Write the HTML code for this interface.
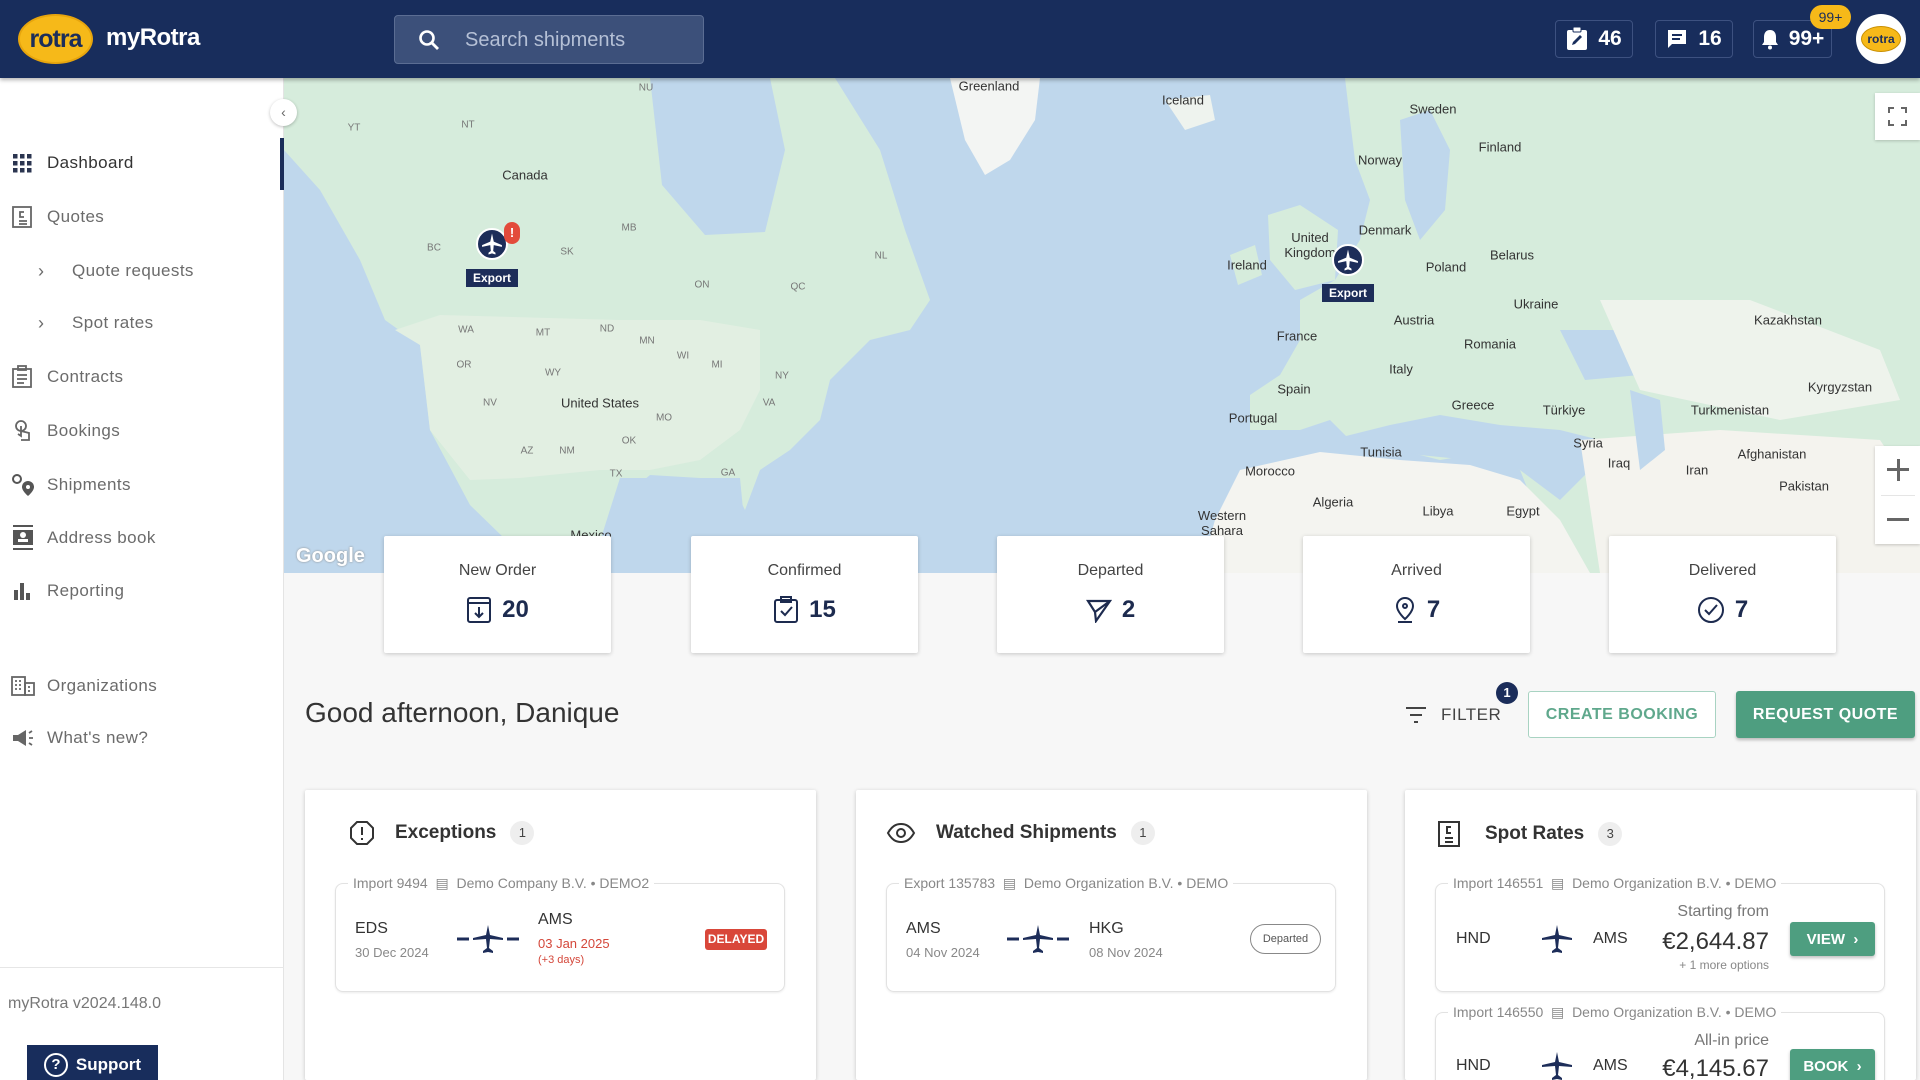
<!DOCTYPE html>
<html><head><meta charset="utf-8">
<style>
*{box-sizing:border-box;margin:0;padding:0}
html{overflow:hidden;width:1920px;height:1080px}
body{width:1920px;height:1080px;overflow:hidden;background:#f7f7f7;font-family:"Liberation Sans",sans-serif;position:relative;color:#333}
.abs{position:absolute}
.hdr{left:0;top:0;width:1920px;height:78px;background:#182d5c;box-shadow:0 2px 4px rgba(0,0,0,.3);z-index:5}
.hbtn{top:20px;height:38px;border:1px solid #3d5180;border-radius:4px;color:#fff;font-weight:bold;font-size:21px;display:flex;align-items:center;justify-content:center;gap:10px}
.side{left:0;top:78px;width:284px;height:1002px;background:#fff;border-right:1px solid #e4e4e4}
.nav{left:0;width:284px;height:30px;font-size:17px;color:#6b6b6b;letter-spacing:.4px;display:flex;align-items:center}
.nav svg{position:absolute;left:11px}
.nav span{position:absolute;left:47px}
.map{left:284px;top:78px;width:1636px;height:495px;background:#b9d4ea;overflow:hidden}
.ml{position:absolute;font-size:13px;color:#333;transform:translate(-50%,-50%);white-space:nowrap}
.ms{position:absolute;font-size:10px;color:#777;transform:translate(-50%,-50%)}
.card{background:#fff;box-shadow:0 1px 4px rgba(0,0,0,.2);border-radius:2px}
.stat{top:536px;width:227px;height:117px}
.stat .l{position:absolute;top:26px;width:100%;text-align:center;font-size:16px;color:#444}
.stat .v{position:absolute;top:60px;width:100%;display:flex;justify-content:center;align-items:center;gap:10px;font-size:24px;color:#1d2b4f;font-weight:bold}
.panel{top:790px;width:511px;height:290px;overflow:hidden}
.ptitle{position:absolute;top:30px;left:44px;display:flex;align-items:center;font-size:19px;font-weight:bold;color:#333}
.cnt{display:inline-block;width:24px;height:24px;border-radius:50%;background:#eee;font-size:13px;font-weight:normal;text-align:center;line-height:24px;margin-left:14px;color:#444}
fieldset{position:absolute;border:1px solid #e2e2e2;border-radius:8px;box-shadow:0 1px 2px rgba(0,0,0,.08)}
legend{font-size:14px;color:#888;padding:0 5px;margin-left:12px;white-space:nowrap}
.code{position:absolute;font-size:16px;color:#333}
.dt{position:absolute;font-size:13px;color:#888}
.gbtn{background:#4e9e80;color:#fff;font-weight:bold;border-radius:3px;box-shadow:0 2px 3px rgba(0,0,0,.25);display:flex;align-items:center;justify-content:center}
</style></head><body>

<div class="abs hdr">
  <div class="abs" style="left:18px;top:14px;width:75px;height:50px;border-radius:50%;background:#f6b919;border:2px solid #e7a50d;font-weight:bold;color:#1b2d5a;font-size:25px;text-align:center;line-height:46px;letter-spacing:-1px">rotra</div>
  <div class="abs" style="left:106px;top:24px;color:#fff;font-size:24px;font-weight:bold;letter-spacing:-.5px">myRotra</div>
  <div class="abs" style="left:394px;top:15px;width:310px;height:49px;background:#3c507a;border:1px solid #5b6d93;border-radius:4px">
    <svg class="abs" style="left:22px;top:12px" width="24" height="24" viewBox="0 0 24 24"><circle cx="10" cy="10" r="6.5" fill="none" stroke="#fff" stroke-width="2.6"/><path d="M15 15l6 6" stroke="#fff" stroke-width="2.8"/></svg>
    <div class="abs" style="left:70px;top:13px;color:#b5c0d6;font-size:20px">Search shipments</div>
  </div>
  <div class="abs hbtn" style="left:1555px;width:78px"><svg width="22" height="24" viewBox="0 0 22 24"><rect x="1" y="3" width="20" height="20" rx="2" fill="#fff"/><rect x="7" y="0" width="8" height="5" rx="1" fill="#fff" stroke="#182d5c"/><path d="M6 18l1-3 7-7 2 2-7 7z" fill="#182d5c"/></svg>46</div>
  <div class="abs hbtn" style="left:1655px;width:78px"><svg width="22" height="22" viewBox="0 0 22 22"><path d="M2 2h18v14H6l-4 4z" fill="#fff"/><path d="M6 7h10M6 11h8" stroke="#182d5c" stroke-width="2"/></svg>16</div>
  <div class="abs hbtn" style="left:1753px;width:79px"><svg width="18" height="22" viewBox="0 0 18 22"><path d="M9 2c4 0 6 3 6 7v5l2 3H1l2-3V9c0-4 2-7 6-7z" fill="#fff"/><circle cx="9" cy="19.5" r="2" fill="#fff"/></svg>99+</div>
  <div class="abs" style="left:1810px;top:5px;width:41px;height:24px;border-radius:12px;background:#f6b919;color:#1b2d5a;font-size:14px;text-align:center;line-height:24px">99+</div>
  <div class="abs" style="left:1856px;top:14px;width:50px;height:50px;border-radius:50%;background:#fff">
    <div class="abs" style="left:5px;top:12px;width:40px;height:26px;border-radius:50%;background:#f6b919;border:1px solid #c98f00;font-size:12px;font-weight:bold;color:#1b2d5a;text-align:center;line-height:24px">rotra</div>
  </div>
</div>

<div class="abs side">
  <div class="abs" style="left:270px;top:21px;width:27px;height:27px;border-radius:50%;background:#fff;box-shadow:0 1px 3px rgba(0,0,0,.25);z-index:3;text-align:center;line-height:26px;color:#666;font-size:14px">&#8249;</div>
  <div class="abs" style="left:280px;top:60px;width:4px;height:52px;background:#1b2d5a"></div>
  <div class="abs" style="left:0;top:889px;width:284px;height:1px;background:#e6e6e6"></div>
  <div class="abs" style="left:8px;top:917px;font-size:16px;color:#777">myRotra v2024.148.0</div>
  <div class="abs" style="left:27px;top:967px;width:131px;height:40px;background:#182d5c;color:#fff;font-weight:bold;font-size:17px;display:flex;align-items:center;justify-content:center;gap:8px"><span style="width:24px;height:24px;border:2px solid #fff;border-radius:50%;font-size:15px;text-align:center;line-height:20px">?</span>Support</div>
</div>

<div class="abs nav" style="top:148px;color:#333"><svg width="22" height="22" viewBox="0 0 22 22" fill="#2b3550"><rect x="2" y="2" width="4.5" height="4.5"/><rect x="9" y="2" width="4.5" height="4.5"/><rect x="16" y="2" width="4.5" height="4.5"/><rect x="2" y="9" width="4.5" height="4.5"/><rect x="9" y="9" width="4.5" height="4.5"/><rect x="16" y="9" width="4.5" height="4.5"/><rect x="2" y="16" width="4.5" height="4.5"/><rect x="9" y="16" width="4.5" height="4.5"/><rect x="16" y="16" width="4.5" height="4.5"/></svg><span>Dashboard</span></div>
<div class="abs nav" style="top:202px"><svg width="22" height="24" viewBox="0 0 22 24" fill="none" stroke="#666" stroke-width="1.8"><rect x="2" y="2" width="18" height="20"/><path d="M13 7h-4v5h4M8 16h8M8 19h8"/></svg><span>Quotes</span></div>
<div class="abs nav" style="top:256px"><span style="left:38px;font-size:18px">&#8250;</span><span style="left:72px">Quote requests</span></div>
<div class="abs nav" style="top:308px"><span style="left:38px;font-size:18px">&#8250;</span><span style="left:72px">Spot rates</span></div>
<div class="abs nav" style="top:362px"><svg width="22" height="24" viewBox="0 0 22 24" fill="none" stroke="#666" stroke-width="1.8"><rect x="2" y="4" width="18" height="18"/><rect x="7" y="1" width="8" height="4"/><path d="M6 10h10M6 14h10M6 18h7"/></svg><span>Contracts</span></div>
<div class="abs nav" style="top:416px"><svg width="22" height="24" viewBox="0 0 22 24" fill="none" stroke="#666" stroke-width="1.8"><circle cx="10" cy="7" r="5"/><path d="M10 7v10l-3-2M10 12l8 2v7H10"/></svg><span>Bookings</span></div>
<div class="abs nav" style="top:470px"><svg width="26" height="24" viewBox="0 0 26 24" fill="#555"><circle cx="6" cy="6" r="4" fill="none" stroke="#555" stroke-width="2"/><path d="M17 8a6 6 0 0 1 6 6c0 4-6 9-6 9s-6-5-6-9a6 6 0 0 1 6-6z"/><circle cx="17" cy="14" r="2" fill="#fff"/></svg><span>Shipments</span></div>
<div class="abs nav" style="top:523px"><svg width="24" height="26" viewBox="0 0 24 26" fill="#555"><rect x="2" y="0" width="20" height="2"/><rect x="2" y="5" width="20" height="15"/><rect x="2" y="23" width="20" height="2"/><circle cx="12" cy="10" r="3" fill="#fff"/><rect x="7" y="14" width="10" height="3" fill="#fff"/></svg><span>Address book</span></div>
<div class="abs nav" style="top:576px"><svg width="22" height="22" viewBox="0 0 22 22" fill="#555"><rect x="3" y="10" width="4" height="10"/><rect x="9" y="3" width="4" height="17"/><rect x="15" y="13" width="4" height="7"/></svg><span>Reporting</span></div>
<div class="abs nav" style="top:671px"><svg width="24" height="22" viewBox="0 0 24 22" fill="none" stroke="#666" stroke-width="1.8"><rect x="1" y="2" width="13" height="18"/><rect x="14" y="8" width="9" height="12"/><path d="M4 6h2M8 6h2M4 10h2M8 10h2M4 14h2M8 14h2M17 12h2M17 16h2"/></svg><span>Organizations</span></div>
<div class="abs nav" style="top:723px"><svg width="26" height="22" viewBox="0 0 26 22" fill="#666"><path d="M2 8h5l8-5v16l-8-5H2z"/><path d="M18 6l3-2M18 11h4M18 16l3 2" stroke="#666" stroke-width="1.8"/></svg><span>What's new?</span></div>

<div class="abs map">
<svg class="abs" style="left:0;top:0" width="1636" height="495" viewBox="284 78 1636 495">
  <rect x="284" y="78" width="1636" height="495" fill="#bfd7ec"/>
  <path d="M284 78H835L880 150 905 230 930 300 910 330 870 340 850 360 830 380 820 420 790 450 760 470 745 510 730 480 700 478 650 475 620 500 600 573H284Z" fill="#d6ecdc"/>
  <path d="M650 78H770L785 150 765 232 705 235 662 185Z" fill="#bfd7ec"/>
  <path d="M284 150L320 190 360 260 385 320 420 345 430 430 470 505 540 573H284Z" fill="#bfd7ec"/>
  <path d="M395 330L420 345 430 430 470 480 520 478 600 470 650 470 700 460 740 430 760 390 760 330 700 320 620 320 440 315Z" fill="#e2efe2"/>
  <path d="M620 478L740 478 745 530 700 573H590Z" fill="#bfd7ec"/>
  <path d="M950 78H1040L1035 120 1010 160 985 175 965 140Z" fill="#f3f5f3"/>
  <path d="M1165 100L1210 95 1215 120 1185 130Z" fill="#eef3ee"/>
  <path d="M1345 78H1920V573H1560L1540 520 1520 470 1470 455 1440 460 1400 450 1350 440 1330 420 1300 430 1250 430 1250 395 1280 375 1300 340 1300 300 1335 280 1360 240 1370 200 1355 160 1350 120Z" fill="#d6ecdc"/>
  <path d="M1400 120L1430 110 1450 150 1445 210 1420 240 1405 200Z" fill="#bfd7ec"/>
  <path d="M1268 215L1300 205 1338 230 1335 280 1295 290 1270 260Z" fill="#d6ecdc"/>
  <path d="M1230 255L1255 245 1262 275 1238 285Z" fill="#d6ecdc"/>
  <path d="M1330 440L1420 455 1470 460 1520 470 1560 500 1590 470 1600 440 1560 430 1500 425 1440 415 1390 425Z" fill="#bfd7ec"/>
  <path d="M1560 330L1630 330 1640 375 1585 380Z" fill="#bfd7ec"/>
  <path d="M1240 470L1320 452 1400 460 1470 465 1520 480 1560 520 1590 573H1200L1215 520Z" fill="#f4f4f0"/>
  <path d="M1580 440L1720 430 1880 440 1920 500V573H1600Z" fill="#f4f3ee"/>
  <path d="M1600 300L1750 300 1880 350 1900 400 1780 420 1640 390Z" fill="#eef3ec"/>
  <path d="M1630 390L1660 400 1665 450 1640 470Z" fill="#bfd7ec"/>
</svg>
<div class="ml" style="left:705px;top:8px">Greenland</div>
<div class="ml" style="left:899px;top:22px">Iceland</div>
<div class="ml" style="left:1149px;top:31px">Sweden</div>
<div class="ml" style="left:1216px;top:69px">Finland</div>
<div class="ml" style="left:1096px;top:82px">Norway</div>
<div class="ml" style="left:241px;top:97px">Canada</div>
<div class="ml" style="left:1101px;top:152px">Denmark</div>
<div class="ml" style="left:1026px;top:167px;line-height:15px;text-align:center">United<br>Kingdom</div>
<div class="ml" style="left:963px;top:187px">Ireland</div>
<div class="ml" style="left:1162px;top:189px">Poland</div>
<div class="ml" style="left:1228px;top:177px">Belarus</div>
<div class="ml" style="left:1252px;top:226px">Ukraine</div>
<div class="ml" style="left:1504px;top:242px">Kazakhstan</div>
<div class="ml" style="left:1013px;top:258px">France</div>
<div class="ml" style="left:1130px;top:242px">Austria</div>
<div class="ml" style="left:1206px;top:266px">Romania</div>
<div class="ml" style="left:1010px;top:311px">Spain</div>
<div class="ml" style="left:1117px;top:291px">Italy</div>
<div class="ml" style="left:969px;top:340px">Portugal</div>
<div class="ml" style="left:1189px;top:327px">Greece</div>
<div class="ml" style="left:1280px;top:332px">Türkiye</div>
<div class="ml" style="left:1446px;top:332px">Turkmenistan</div>
<div class="ml" style="left:1556px;top:309px">Kyrgyzstan</div>
<div class="ml" style="left:1304px;top:365px">Syria</div>
<div class="ml" style="left:1335px;top:385px">Iraq</div>
<div class="ml" style="left:1413px;top:392px">Iran</div>
<div class="ml" style="left:1488px;top:376px">Afghanistan</div>
<div class="ml" style="left:1520px;top:408px">Pakistan</div>
<div class="ml" style="left:986px;top:393px">Morocco</div>
<div class="ml" style="left:1097px;top:374px">Tunisia</div>
<div class="ml" style="left:1049px;top:424px">Algeria</div>
<div class="ml" style="left:1154px;top:433px">Libya</div>
<div class="ml" style="left:1239px;top:433px">Egypt</div>
<div class="ml" style="left:938px;top:445px;line-height:15px;text-align:center">Western<br>Sahara</div>
<div class="ml" style="left:316px;top:325px">United States</div>
<div class="ml" style="left:307px;top:457px">Mexico</div>
<div class="ms" style="left:362px;top:10px">NU</div><div class="ms" style="left:184px;top:47px">NT</div><div class="ms" style="left:70px;top:50px">YT</div>
<div class="ms" style="left:345px;top:150px">MB</div><div class="ms" style="left:150px;top:170px">BC</div><div class="ms" style="left:283px;top:174px">SK</div>
<div class="ms" style="left:418px;top:207px">ON</div><div class="ms" style="left:514px;top:209px">QC</div><div class="ms" style="left:597px;top:178px">NL</div>
<div class="ms" style="left:182px;top:252px">WA</div><div class="ms" style="left:259px;top:255px">MT</div><div class="ms" style="left:323px;top:251px">ND</div>
<div class="ms" style="left:363px;top:263px">MN</div><div class="ms" style="left:180px;top:287px">OR</div><div class="ms" style="left:269px;top:295px">WY</div>
<div class="ms" style="left:399px;top:278px">WI</div><div class="ms" style="left:433px;top:287px">MI</div><div class="ms" style="left:498px;top:298px">NY</div>
<div class="ms" style="left:206px;top:325px">NV</div><div class="ms" style="left:380px;top:340px">MO</div><div class="ms" style="left:485px;top:325px">VA</div>
<div class="ms" style="left:243px;top:373px">AZ</div><div class="ms" style="left:283px;top:373px">NM</div><div class="ms" style="left:345px;top:363px">OK</div>
<div class="ms" style="left:332px;top:396px">TX</div><div class="ms" style="left:444px;top:395px">GA</div>
<div class="abs" style="left:192px;top:150px;width:32px;height:32px;border-radius:50%;background:#1d2d59;border:2px solid #fff"><svg width="28" height="28" viewBox="0 0 24 24"><path d="M12 3l1.5 7 7 3v1.5l-7-1.5-.5 5 2 1.5V21l-3-1-3 1v-1.5l2-1.5-.5-5-7 1.5V13l7-3z" fill="#fff"/></svg></div>
<div class="abs" style="left:220px;top:144px;width:16px;height:22px;border-radius:8px;background:#e34b3b;color:#fff;font-size:13px;font-weight:bold;text-align:center;line-height:22px">!</div>
<div class="abs" style="left:182px;top:191px;width:52px;height:18px;background:#1d2d59;color:#fff;font-size:12px;font-weight:bold;text-align:center;line-height:18px">Export</div>
<div class="abs" style="left:1048px;top:166px;width:32px;height:32px;border-radius:50%;background:#1d2d59;border:2px solid #fff"><svg width="28" height="28" viewBox="0 0 24 24"><path d="M12 3l1.5 7 7 3v1.5l-7-1.5-.5 5 2 1.5V21l-3-1-3 1v-1.5l2-1.5-.5-5-7 1.5V13l7-3z" fill="#fff"/></svg></div>
<div class="abs" style="left:1038px;top:206px;width:52px;height:18px;background:#1d2d59;color:#fff;font-size:12px;font-weight:bold;text-align:center;line-height:18px">Export</div>
<div class="abs" style="left:1591px;top:15px;width:45px;height:47px;background:#fff;box-shadow:0 1px 3px rgba(0,0,0,.2)"><svg class="abs" style="left:13px;top:14px" width="19" height="19" viewBox="0 0 19 19" fill="none" stroke="#666" stroke-width="2"><path d="M1 6V1h5M13 1h5v5M18 13v5h-5M6 18H1v-5"/></svg></div>
<div class="abs" style="left:1591px;top:368px;width:45px;height:98px;background:#fff;box-shadow:0 1px 3px rgba(0,0,0,.2)"><div class="abs" style="left:12px;top:22px;width:22px;height:3px;background:#666"></div><div class="abs" style="left:21.5px;top:13px;width:3px;height:22px;background:#666"></div><div class="abs" style="left:6px;top:49px;width:34px;height:1px;background:#e5e5e5"></div><div class="abs" style="left:12px;top:72px;width:22px;height:3px;background:#666"></div></div>
<div class="abs" style="left:12px;top:467px;font-size:20px;font-weight:bold;color:#fff;text-shadow:0 0 2px #888">Google</div>
</div>

<div class="abs card stat" style="left:384px"><div class="l">New Order</div><div class="v"><svg width="26" height="28" viewBox="0 0 26 28" fill="none" stroke="#1d2b4f" stroke-width="2"><rect x="2" y="2" width="22" height="24" rx="2"/><path d="M2 7h22M13 11v10M9 17l4 4 4-4"/></svg>20</div></div>
<div class="abs card stat" style="left:691px"><div class="l">Confirmed</div><div class="v"><svg width="26" height="28" viewBox="0 0 26 28" fill="none" stroke="#1d2b4f" stroke-width="2"><rect x="2" y="4" width="22" height="22" rx="2"/><rect x="8" y="1" width="10" height="5"/><path d="M8 15l4 4 7-8"/></svg>15</div></div>
<div class="abs card stat" style="left:997px"><div class="l">Departed</div><div class="v"><svg width="26" height="26" viewBox="0 0 26 26" fill="none" stroke="#1d2b4f" stroke-width="2.2"><path d="M2 4h22L10 24l-1-9zM9 15l15-11"/></svg>2</div></div>
<div class="abs card stat" style="left:1303px"><div class="l">Arrived</div><div class="v"><svg width="24" height="28" viewBox="0 0 24 28" fill="none" stroke="#1d2b4f" stroke-width="2"><path d="M12 2a8 8 0 0 1 8 8c0 6-8 13-8 13S4 16 4 10a8 8 0 0 1 8-8z"/><circle cx="12" cy="10" r="2"/><path d="M5 26h14"/></svg>7</div></div>
<div class="abs card stat" style="left:1609px"><div class="l">Delivered</div><div class="v"><svg width="28" height="28" viewBox="0 0 28 28" fill="none" stroke="#1d2b4f" stroke-width="2"><circle cx="14" cy="14" r="12"/><path d="M8 14l4 4 8-9"/></svg>7</div></div>

<div class="abs" style="left:305px;top:697px;font-size:28px;color:#333">Good afternoon, Danique</div>
<svg class="abs" style="left:1404px;top:705px" width="24" height="20" viewBox="0 0 24 20" stroke="#444" stroke-width="2"><path d="M2 3h20M6 10h12M10 17h4"/></svg>
<div class="abs" style="left:1441px;top:705px;font-size:17px;color:#444;letter-spacing:.5px">FILTER</div>
<div class="abs" style="left:1496px;top:682px;width:22px;height:22px;border-radius:50%;background:#1b2d5a;color:#fff;font-size:13px;font-weight:bold;text-align:center;line-height:22px">1</div>
<div class="abs" style="left:1528px;top:691px;width:188px;height:47px;border:1px solid #a8d3c2;border-radius:3px;background:#fff;color:#5fa88c;font-weight:bold;font-size:16px;letter-spacing:.5px;text-align:center;line-height:45px">CREATE BOOKING</div>
<div class="abs gbtn" style="left:1736px;top:691px;width:179px;height:47px;font-size:16px;letter-spacing:.5px">REQUEST QUOTE</div>

<div class="abs card panel" style="left:305px">
  <div class="ptitle"><svg width="26" height="26" viewBox="0 0 26 26" fill="none" stroke="#333" stroke-width="2"><path d="M8 2h10l6 6v10l-6 6H8l-6-6V8z"/><path d="M13 7v8M13 18v2"/></svg><span style="margin-left:20px">Exceptions</span><span class="cnt">1</span></div>
  <fieldset style="left:30px;top:85px;width:450px;height:117px"><legend>Import 9494 &nbsp;▤&nbsp; Demo Company B.V. • DEMO2</legend></fieldset>
  <div class="code" style="left:50px;top:130px">EDS</div><div class="dt" style="left:50px;top:155px">30 Dec 2024</div>
  <svg class="abs" style="left:152px;top:134px" width="62" height="30" viewBox="0 0 62 30"><path d="M0 15h12M50 15h12" stroke="#1d2d59" stroke-width="3"/><path d="M31 1l2 10 13 3v2l-13-1-1 9 4 3v2l-5-1-5 1v-2l4-3-1-9-13 1v-2l13-3z" fill="#1d2d59"/></svg>
  <div class="code" style="left:233px;top:121px">AMS</div><div class="dt" style="left:233px;top:146px;color:#d4473a">03 Jan 2025</div><div class="dt" style="left:233px;top:164px;color:#d4473a;font-size:11px">(+3 days)</div>
  <div class="abs" style="left:400px;top:139px;width:62px;height:21px;background:#d9473a;color:#fff;font-size:12px;font-weight:bold;border-radius:3px;text-align:center;line-height:21px">DELAYED</div>
</div>

<div class="abs card panel" style="left:856px">
  <div class="ptitle" style="left:30px"><svg width="30" height="26" viewBox="0 0 30 26" fill="none" stroke="#333" stroke-width="2"><path d="M2 13C6 6 10 4 15 4s9 2 13 9c-4 7-8 9-13 9S6 20 2 13z"/><circle cx="15" cy="13" r="4"/></svg><span style="margin-left:20px">Watched Shipments</span><span class="cnt">1</span></div>
  <fieldset style="left:30px;top:85px;width:450px;height:117px"><legend>Export 135783 &nbsp;▤&nbsp; Demo Organization B.V. • DEMO</legend></fieldset>
  <div class="code" style="left:50px;top:130px">AMS</div><div class="dt" style="left:50px;top:155px">04 Nov 2024</div>
  <svg class="abs" style="left:151px;top:134px" width="62" height="30" viewBox="0 0 62 30"><path d="M0 15h12M50 15h12" stroke="#1d2d59" stroke-width="3"/><path d="M31 1l2 10 13 3v2l-13-1-1 9 4 3v2l-5-1-5 1v-2l4-3-1-9-13 1v-2l13-3z" fill="#1d2d59"/></svg>
  <div class="code" style="left:233px;top:130px">HKG</div><div class="dt" style="left:233px;top:155px">08 Nov 2024</div>
  <div class="abs" style="left:394px;top:134px;width:71px;height:30px;border:1px solid #888;border-radius:15px;font-size:11px;color:#555;text-align:center;line-height:28px">Departed</div>
</div>

<div class="abs card panel" style="left:1405px">
  <div class="ptitle" style="left:32px"><svg width="24" height="28" viewBox="0 0 24 28" fill="none" stroke="#333" stroke-width="2"><rect x="2" y="2" width="20" height="24"/><path d="M14 7h-4v6h4M8 18h8M8 22h8"/></svg><span style="margin-left:24px">Spot Rates</span><span class="cnt">3</span></div>
  <fieldset style="left:30px;top:85px;width:450px;height:117px"><legend>Import 146551 &nbsp;▤&nbsp; Demo Organization B.V. • DEMO</legend></fieldset>
  <div class="code" style="left:51px;top:140px">HND</div>
  <svg class="abs" style="left:132px;top:134px" width="40" height="30" viewBox="11 0 40 30"><path d="M31 1l2 10 13 3v2l-13-1-1 9 4 3v2l-5-1-5 1v-2l4-3-1-9-13 1v-2l13-3z" fill="#1d2d59"/></svg>
  <div class="code" style="left:188px;top:140px">AMS</div>
  <div class="abs" style="left:250px;top:113px;width:114px;text-align:right;font-size:16px;color:#777">Starting from</div>
  <div class="abs" style="left:230px;top:138px;width:134px;text-align:right;font-size:24px;color:#333">€2,644.87</div>
  <div class="abs" style="left:230px;top:168px;width:134px;text-align:right;font-size:12px;color:#888">+ 1 more options</div>
  <div class="abs gbtn" style="left:385px;top:132px;width:85px;height:34px;font-size:15px">VIEW &nbsp;›</div>
  <fieldset style="left:30px;top:214px;width:450px;height:117px"><legend>Import 146550 &nbsp;▤&nbsp; Demo Organization B.V. • DEMO</legend></fieldset>
  <div class="code" style="left:51px;top:267px">HND</div>
  <svg class="abs" style="left:132px;top:261px" width="40" height="30" viewBox="11 0 40 30"><path d="M31 1l2 10 13 3v2l-13-1-1 9 4 3v2l-5-1-5 1v-2l4-3-1-9-13 1v-2l13-3z" fill="#1d2d59"/></svg>
  <div class="code" style="left:188px;top:267px">AMS</div>
  <div class="abs" style="left:250px;top:242px;width:114px;text-align:right;font-size:16px;color:#777">All-in price</div>
  <div class="abs" style="left:230px;top:265px;width:134px;text-align:right;font-size:24px;color:#333">€4,145.67</div>
  <div class="abs gbtn" style="left:385px;top:259px;width:85px;height:34px;font-size:15px">BOOK &nbsp;›</div>
</div>
</body></html>
